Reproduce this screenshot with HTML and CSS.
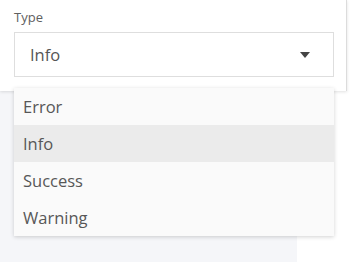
FILE: index.html
```html
<!DOCTYPE html>
<html>
<head>
<meta charset="utf-8">
<link rel="stylesheet" href="styles.css">
</head>
<body>
<div class="page">
  <div class="panel">
    <label class="label">Type</label>
    <div class="select">
      <span class="value">Info</span>
      <svg class="arrow" width="10" height="6" viewBox="0 0 10 6"><path d="M0 0h10L5 6z" fill="#444"/></svg>
    </div>
  </div>
  <div class="below">
    <div class="grey"></div>
    <div class="white"></div>
  </div>
  <ul class="menu">
    <li class="item">Error</li>
    <li class="item active">Info</li>
    <li class="item">Success</li>
    <li class="item">Warning</li>
  </ul>
</div>
</body>
</html>
```
FILE: styles.css
```css
html, body {
  margin: 0;
  padding: 0;
  background: #fff;
  font-family: "Open Sans", "Noto Sans", sans-serif;
}
.page {
  position: relative;
  width: 351px;
  height: 262px;
  display: flex;
  flex-direction: column;
  overflow: hidden;
}
.panel {
  box-sizing: border-box;
  width: 347px;
  height: 91px;
  padding: 8px 13px 0 14px;
  background: #fff;
  border-right: 1px solid #dcdcdc;
  box-shadow: 0 1px 3px rgba(0,0,0,0.12);
  position: relative;
  z-index: 1;
  display: flex;
  flex-direction: column;
}
.label {
  font-size: 13px;
  line-height: 18px;
  color: #606060;
  height: 24px;
}
.select {
  box-sizing: border-box;
  width: 320px;
  height: 45px;
  border: 1px solid #dedede;
  display: flex;
  align-items: center;
  justify-content: space-between;
  padding: 0 23px 0 15px;
}
.value {
  font-size: 16.5px;
  color: #555;
}
.arrow {
  display: block;
}
.below {
  flex: 1;
  display: flex;
}
.grey {
  width: 297px;
  background: #f5f6f9;
}
.white {
  flex: 1;
  background: #fff;
}
.menu {
  position: absolute;
  left: 14px;
  top: 88px;
  width: 320px;
  margin: 0;
  padding: 0;
  list-style: none;
  background: #fafafa;
  box-shadow: 0 1px 4px rgba(0,0,0,0.18);
  z-index: 2;
}
.item {
  height: 37px;
  line-height: 37px;
  padding-left: 9px;
  font-size: 16.5px;
  color: #575757;
}
.item.active {
  background: #ebebeb;
}
```
